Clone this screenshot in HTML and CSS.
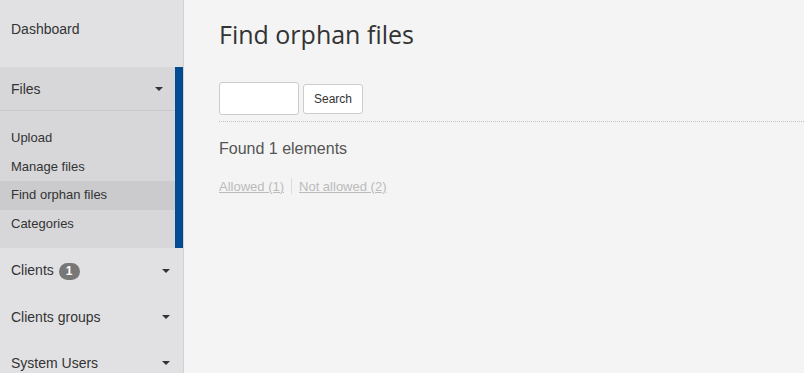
FILE: index.html
```html
<!DOCTYPE html>
<html lang="en">
<head>
<meta charset="UTF-8">
<meta name="viewport" content="width=device-width, initial-scale=1.0">
<title>Find orphan files</title>
<link rel="stylesheet" href="styles.css">
</head>
<body>
    <div class="layout">
        <div class="sidebar">
            <div class="nav-single">Dashboard</div>
            <div class="nav-group open">
                <div class="nav-head">Files <span class="caret"></span></div>
                <ul class="sub">
                    <li>Upload</li>
                    <li>Manage files</li>
                    <li class="active">Find orphan files</li>
                    <li>Categories</li>
                </ul>
            </div>
            <div class="nav-group">
                <div class="nav-head">
                    <span>Clients <span class="badge">1</span></span>
                    <span class="caret"></span>
                </div>
            </div>
            <div class="nav-group">
                <div class="nav-head">Clients groups <span class="caret"></span></div>
            </div>
            <div class="nav-group">
                <div class="nav-head">System Users <span class="caret"></span></div>
            </div>
        </div>
        <div class="main">
            <h1>Find orphan files</h1>
            <form class="search">
                <input type="text">
                <button type="button">Search</button>
            </form>
            <p class="found">Found 1 elements</p>
            <div class="filters">
                <a href="#">Allowed (1)</a>
                <span class="sep"></span>
                <a href="#">Not allowed (2)</a>
            </div>
        </div>
    </div>
</body>
</html>
```

FILE: styles.css
```css
body {
    margin: 0;
    background-color: #f4f4f4;
    font-family: "Liberation Sans", Arial, sans-serif;
    color: #333;
}
.layout {
    display: flex;
    height: 373px;
    overflow: hidden;
}
.sidebar {
    width: 183px;
    flex-shrink: 0;
    background-color: #e1e1e3;
    border-right: 1px solid #d2d2d4;
    font-size: 14px;
}
.nav-single {
    height: 67px;
    line-height: 59px;
    padding-left: 11px;
}
.nav-head {
    display: flex;
    justify-content: space-between;
    align-items: center;
    height: 46px;
    padding: 0 13px 0 11px;
}
.nav-group.open {
    background-color: #d7d7d9;
    border-right: 8px solid #004b91;
}
.nav-group.open .nav-head {
    height: 43px;
    padding-right: 12px;
    border-bottom: 1px solid #c9c9cb;
}
.caret {
    width: 0;
    height: 0;
    border-left: 4px solid transparent;
    border-right: 4px solid transparent;
    border-top: 4px solid #333;
}
.badge {
    display: inline-block;
    background-color: #777;
    color: #fff;
    font-size: 12px;
    font-weight: bold;
    line-height: 17px;
    min-width: 21px;
    text-align: center;
    border-radius: 9px;
    margin-left: 1px;
}
.sub {
    list-style: none;
    margin: 0;
    padding: 13px 0 10px;
    font-size: 13px;
}
.sub li {
    height: 28.5px;
    line-height: 28.5px;
    padding-left: 11px;
}
.sub li.active {
    background-color: #cbcbcd;
}
.main {
    flex: 1;
    padding-left: 35px;
}
h1 {
    font-family: "Open Sans", sans-serif;
    font-weight: normal;
    font-size: 25px;
    margin: 16px 0 0;
    line-height: 36px;
}
.search {
    display: flex;
    align-items: center;
    gap: 4px;
    margin-top: 30px;
    padding-bottom: 6px;
    border-bottom: 1px dotted #c4c4c4;
}
.search input {
    width: 80px;
    height: 33px;
    box-sizing: border-box;
    border: 1px solid #ccc;
    border-radius: 3px;
    background: #fff;
    margin: 0;
}
.search button {
    width: 60px;
    height: 30px;
    border: 1px solid #ccc;
    border-radius: 3px;
    background: #fff;
    font-family: "Liberation Sans", Arial, sans-serif;
    font-size: 12px;
    color: #333;
}
.found {
    font-size: 16px;
    color: #555;
    margin: 17px 0 0;
    line-height: 20px;
}
.filters {
    display: flex;
    align-items: center;
    gap: 7px;
    margin-top: 19px;
    font-size: 13px;
}
.filters a {
    color: #bbb;
}
.sep {
    width: 1px;
    height: 16px;
    background-color: #ddd;
}
```
